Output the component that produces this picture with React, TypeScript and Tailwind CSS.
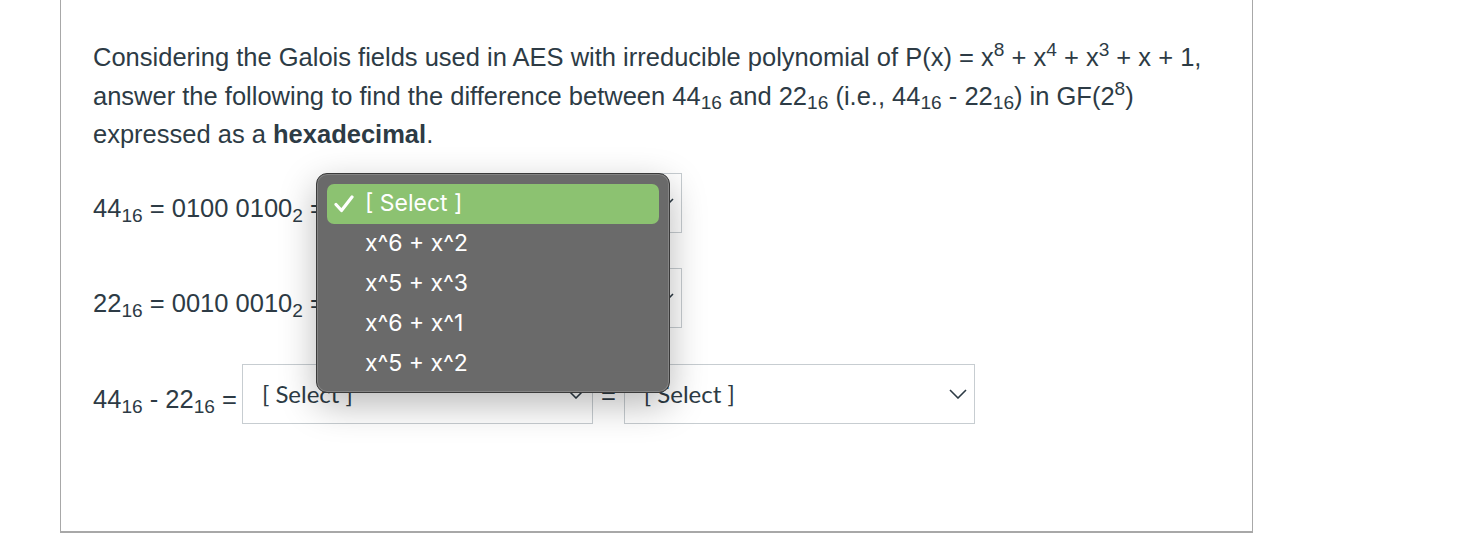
import React from 'react';

const textFont = { fontFamily: '"Liberation Sans", Arial, sans-serif' };
const latoFont = { fontFamily: 'Lato, "Liberation Sans", sans-serif' };
const menuFont = { fontFamily: 'Inter, "Liberation Sans", sans-serif' };

function Chevron() {
  return (
    <svg width="18" height="10" viewBox="0 0 18 10" className="shrink-0">
      <path d="M1 1 L9 9 L17 1" fill="none" stroke="#2d3b45" strokeWidth="1.6" />
    </svg>
  );
}

function SelectBox({ className = '' }: { className?: string }) {
  return (
    <div
      className={`h-[60px] w-[351px] border border-[#c7cdd1] bg-white flex items-center justify-between pl-[19px] pr-[7px] text-[24px] text-[#2d3b45] ${className}`}
      style={latoFont}
    >
      <span>[ Select ]</span>
      <Chevron />
    </div>
  );
}

const options = ['x^6 + x^2', 'x^5 + x^3', 'x^6 + x^1', 'x^5 + x^2'];

function NativeMenu() {
  return (
    <div
      className="absolute left-[-15px] top-0 w-[354px] h-[220px] rounded-[11px] bg-[#6a6a6a] border border-[#3a3a3a] shadow-[0_12px_36px_rgba(0,0,0,0.28),inset_0_0_0_1px_rgba(255,255,255,0.18)] px-[10px] pt-[10px] text-white text-[23px] z-10"
      style={menuFont}
    >
      <div className="h-[40px] rounded-[7px] bg-[#8cc271] flex items-center pl-[7px]">
        <svg width="20" height="18" viewBox="0 0 20 18" className="mr-[11px]">
          <path d="M2 9.5 L7.5 15.5 L18 2" fill="none" stroke="white" strokeWidth="3.2" strokeLinecap="round" strokeLinejoin="round" />
        </svg>
        <span>[ Select ]</span>
      </div>
      {options.map((o) => (
        <div key={o} className="h-[40px] flex items-center pl-[38px]">
          {o}
        </div>
      ))}
    </div>
  );
}

export default function App() {
  return (
    <div className="bg-white min-h-screen w-[1482px] h-[546px] overflow-hidden">
      <div
        className="ml-[60px] w-[1193px] border-x border-b-2 border-[#a8a8a8] pt-[38px] pb-[107px] pl-[32px] pr-[24px] text-[#2d3b45] text-[25.5px]"
        style={textFont}
      >
        <p className="leading-[38.5px]">
          Considering the Galois fields used in AES with irreducible polynomial of P(x) = x<sup>8</sup> + x
          <sup>4</sup> + x<sup>3</sup> + x + 1, answer the following to find the difference between 44
          <sub>16</sub> and 22<sub>16</sub> (i.e., 44<sub>16</sub> - 22<sub>16</sub>) in GF(2<sup>8</sup>)
          expressed as a <strong className="font-bold">hexadecimal</strong>.
        </p>

        <div className="mt-[19px] flex items-center h-[60px]">
          <span className="pt-[12px]">
            44<sub>16</sub> = 0100 0100<sub>2</sub> =
          </span>
          <div className="relative ml-[6px]">
            <SelectBox />
            <NativeMenu />
          </div>
        </div>

        <div className="mt-[35px] flex items-center h-[60px]">
          <span className="pt-[12px]">
            22<sub>16</sub> = 0010 0010<sub>2</sub> =
          </span>
          <SelectBox className="ml-[6px]" />
        </div>

        <div className="mt-[36px] flex items-center h-[60px]">
          <span className="pt-[12px]">
            44<sub>16</sub> - 22<sub>16</sub> =
          </span>
          <SelectBox className="ml-[5px]" />
          <span className="mx-[8px] pt-[4px]">=</span>
          <SelectBox />
        </div>
      </div>
    </div>
  );
}
